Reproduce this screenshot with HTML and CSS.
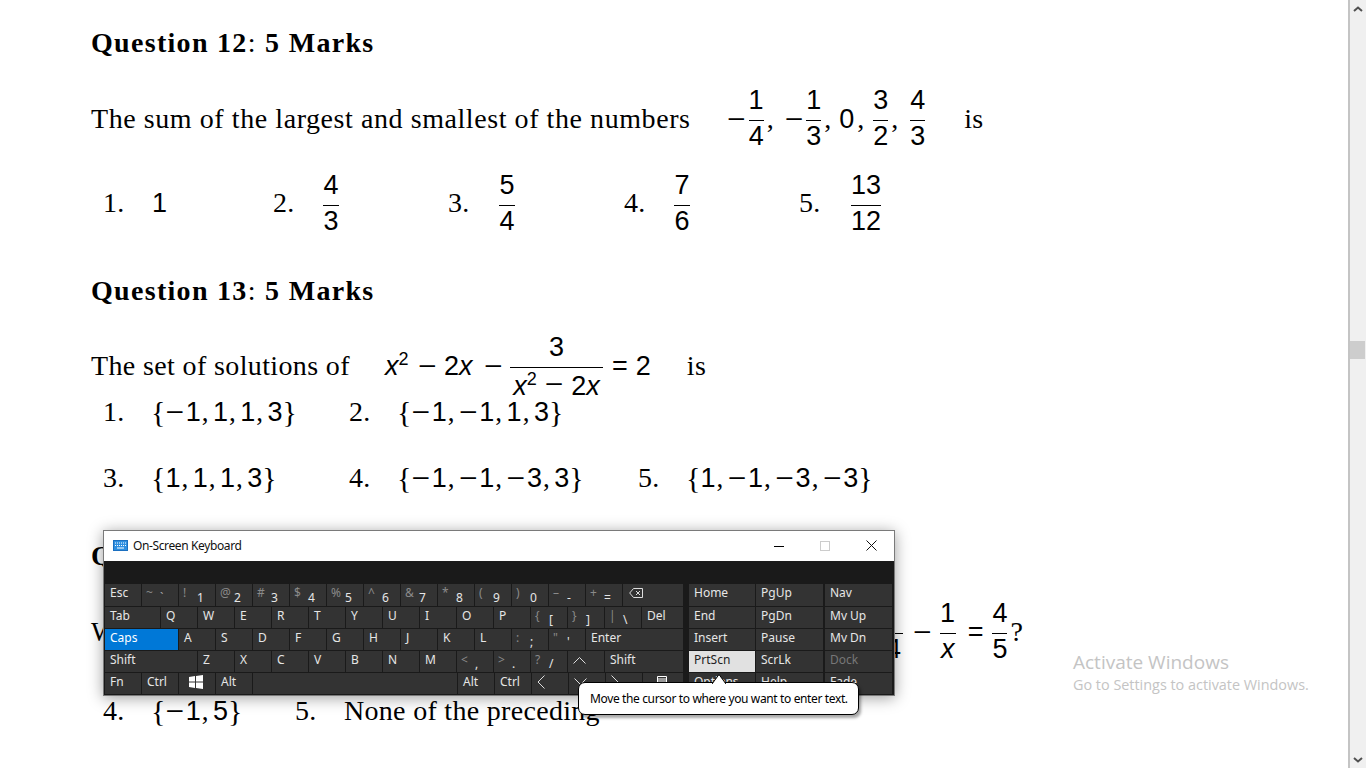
FILE: index.html
```html
<!DOCTYPE html>
<html lang="en">
<head>
<meta charset="utf-8">
<title>Question sheet</title>
<link rel="stylesheet" href="styles.css">
</head>
<body>
<div class="screen">
  <main class="doc">
    <h2 class="heading h12">Question 12<span class="colon">:</span> 5 Marks</h2>
    <div class="row q q12">
      <span class="t s-q12">The sum of the largest and smallest of the numbers</span>
      <span class="m mn a1">−</span><span class="frac f-a"><span>1</span><span>4</span></span><span class="t cm">,</span>
      <span class="m mn a2">−</span><span class="frac f-a"><span>1</span><span>3</span></span><span class="t cm">,</span>
      <span class="m a3">0</span><span class="t cm">,</span>
      <span class="frac f-a a4"><span>3</span><span>2</span></span><span class="t cm">,</span>
      <span class="frac f-a a5"><span>4</span><span>3</span></span>
      <span class="t a6">is</span>
    </div>
    <div class="row q opts12">
      <div class="opt"><span class="t n">1.</span><span class="m">1</span></div>
      <div class="opt"><span class="t n">2.</span><span class="frac"><span>4</span><span>3</span></span></div>
      <div class="opt"><span class="t n n3">3.</span><span class="frac"><span>5</span><span>4</span></span></div>
      <div class="opt"><span class="t n">4.</span><span class="frac"><span>7</span><span>6</span></span></div>
      <div class="opt"><span class="t n n5">5.</span><span class="frac f-w"><span>13</span><span>12</span></span></div>
    </div>

    <h2 class="heading h13">Question 13<span class="colon">:</span> 5 Marks</h2>
    <div class="row q q13">
      <span class="t s-q13">The set of solutions of</span>
      <span class="m b1"><i>x</i><sup>2</sup></span><span class="m mn b2">−</span><span class="m b3">2<i>x</i></span><span class="m mn b4">−</span>
      <span class="frac f-big"><span>3</span><span><i>x</i><sup>2</sup><b class="op">−</b>2<i>x</i></span></span>
      <span class="m b5">=</span><span class="m b6">2</span>
      <span class="t b7">is</span>
    </div>
    <div class="row line r1">
      <span class="t n">1.</span><span class="set w1"><span class="br">{</span><span class="mi">−</span>1<span class="c">,</span>1<span class="c">,</span>1<span class="c">,</span>3<span class="br">}</span></span>
      <span class="t n">2.</span><span class="set"><span class="br">{</span><span class="mi">−</span>1<span class="c">,</span><span class="mi">−</span>1<span class="c">,</span>1<span class="c">,</span>3<span class="br">}</span></span>
    </div>
    <div class="row line r2">
      <span class="t n">3.</span><span class="set w1"><span class="br">{</span>1<span class="c">,</span>1<span class="c">,</span>1<span class="c">,</span>3<span class="br">}</span></span>
      <span class="t n">4.</span><span class="set w2"><span class="br">{</span><span class="mi">−</span>1<span class="c">,</span><span class="mi">−</span>1<span class="c">,</span><span class="mi">−</span>3<span class="c">,</span>3<span class="br">}</span></span>
      <span class="t n">5.</span><span class="set"><span class="br">{</span>1<span class="c">,</span><span class="mi">−</span>1<span class="c">,</span><span class="mi">−</span>3<span class="c">,</span><span class="mi">−</span>3<span class="br">}</span></span>
    </div>

    <h2 class="heading h14">Question 14<span class="colon">:</span> 5 Marks</h2>
    <div class="row q q14">
      <span class="t s-q14">What is the set of all values of <i>x</i> such that</span>
      <span class="frac f-d"><span>1</span><span>14</span></span>
      <span class="m mn d2">−</span>
      <span class="frac d3"><span>1</span><span><i>x</i></span></span>
      <span class="m d4">=</span>
      <span class="frac f-a d5"><span>4</span><span>5</span></span>
      <span class="t qm">?</span>
    </div>
    <div class="row line r3">
      <span class="t n">4.</span><span class="set w3"><span class="br">{</span><span class="mi">−</span>1<span class="c">,</span>5<span class="br">}</span></span>
      <span class="t n n4">5.</span><span class="t none">None of the preceding</span>
    </div>
  </main>

  <aside class="scrollbar">
    <svg class="arrow" width="10" height="6" viewBox="0 0 10 6"><path d="M1 5l4-3.5L9 5" fill="none" stroke="#505050" stroke-width="2"/></svg>
    <div class="track"><div class="thumb"></div></div>
    <svg class="arrow" width="10" height="6" viewBox="0 0 10 6"><path d="M1 1l4 3.5L9 1" fill="none" stroke="#505050" stroke-width="2"/></svg>
  </aside>

  <div class="activate">
    <div class="act-1">Activate Windows</div>
    <div class="act-2">Go to Settings to activate Windows.</div>
  </div>

  <section class="osk">
    <header class="osk-title">
      <svg class="osk-icon" width="15" height="11" viewBox="0 0 15 11"><rect x="0.5" y="0.5" width="14" height="10" fill="#2f8fe0" stroke="#1b6fc0"/><path d="M2 3h11M2 5.5h11" stroke="#fff" stroke-dasharray="1 1"/><path d="M4 8h7" stroke="#fff"/></svg>
      <span class="osk-name">On-Screen Keyboard</span>
      <span class="win-btn"><svg width="10" height="10" viewBox="0 0 10 10"><path d="M0 5.5h10" stroke="#000"/></svg></span>
      <span class="win-btn"><svg width="10" height="10" viewBox="0 0 10 10"><rect x="0.5" y="0.5" width="9" height="9" fill="none" stroke="#ccc"/></svg></span>
      <span class="win-btn"><svg width="11" height="11" viewBox="0 0 11 11"><path d="M.5.5l10 10M10.500.5l-10 10" stroke="#111"/></svg></span>
    </header>
    <div class="osk-strip"></div>
    <div class="osk-keys">
      <div class="kb-main">
        <div class="kb-row top">
          <span class="key">Esc</span>
          <span class="key dual"><span class="sh">~</span><span class="mn dim">`</span></span>
          <span class="key dual"><span class="sh">!</span><span class="mn">1</span></span>
          <span class="key dual"><span class="sh">@</span><span class="mn">2</span></span>
          <span class="key dual"><span class="sh">#</span><span class="mn">3</span></span>
          <span class="key dual"><span class="sh">$</span><span class="mn">4</span></span>
          <span class="key dual"><span class="sh">%</span><span class="mn">5</span></span>
          <span class="key dual"><span class="sh">^</span><span class="mn">6</span></span>
          <span class="key dual"><span class="sh">&amp;</span><span class="mn">7</span></span>
          <span class="key dual"><span class="sh">*</span><span class="mn">8</span></span>
          <span class="key dual"><span class="sh">(</span><span class="mn">9</span></span>
          <span class="key dual"><span class="sh">)</span><span class="mn">0</span></span>
          <span class="key dual"><span class="sh">–</span><span class="mn">-</span></span>
          <span class="key dual"><span class="sh">+</span><span class="mn">=</span></span>
          <span class="key k-bksp"><svg width="14" height="10" viewBox="0 0 14 10"><path d="M4.500.5h9v9h-9L.7 5z" fill="none" stroke="#ddd"/><path d="M7 3l4 4M11 3L7 7" stroke="#ddd"/></svg></span>
        </div>
        <div class="kb-row">
          <span class="key k-tab">Tab</span>
          <span class="key">Q</span><span class="key">W</span><span class="key">E</span><span class="key">R</span><span class="key">T</span><span class="key">Y</span><span class="key">U</span><span class="key">I</span><span class="key">O</span><span class="key">P</span>
          <span class="key dual"><span class="sh">{</span><span class="mn">[</span></span>
          <span class="key dual"><span class="sh">}</span><span class="mn">]</span></span>
          <span class="key dual"><span class="sh">|</span><span class="mn">\</span></span>
          <span class="key k-del">Del</span>
        </div>
        <div class="kb-row">
          <span class="key k-caps">Caps</span>
          <span class="key">A</span><span class="key">S</span><span class="key">D</span><span class="key">F</span><span class="key">G</span><span class="key">H</span><span class="key">J</span><span class="key">K</span><span class="key">L</span>
          <span class="key dual"><span class="sh">:</span><span class="mn">;</span></span>
          <span class="key dual"><span class="sh">"</span><span class="mn">'</span></span>
          <span class="key k-enter">Enter</span>
        </div>
        <div class="kb-row">
          <span class="key k-shiftl">Shift</span>
          <span class="key">Z</span><span class="key">X</span><span class="key">C</span><span class="key">V</span><span class="key">B</span><span class="key">N</span><span class="key">M</span>
          <span class="key dual"><span class="sh">&lt;</span><span class="mn">,</span></span>
          <span class="key dual"><span class="sh">&gt;</span><span class="mn">.</span></span>
          <span class="key dual"><span class="sh">?</span><span class="mn">/</span></span>
          <span class="key"><svg width="13" height="8" viewBox="0 0 13 8"><path d="M.5 7.500l6-6 6 6" fill="none" stroke="#ddd"/></svg></span>
          <span class="key k-shiftr">Shift</span>
        </div>
        <div class="kb-row">
          <span class="key">Fn</span>
          <span class="key">Ctrl</span>
          <span class="key k-win"><svg width="14" height="14" viewBox="0 0 14 14"><path d="M0 2l6-.9V6.500H0zM7 1l7-1v6.500H7zM0 7.500h6v5.400l-6-.9zM7 7.500h7V14l-7-1z" fill="#fff"/></svg></span>
          <span class="key">Alt</span>
          <span class="key k-space"></span>
          <span class="key">Alt</span>
          <span class="key">Ctrl</span>
          <span class="key"><svg width="8" height="14" viewBox="0 0 8 14"><path d="M7.500.5L1 7l6.500 6.500" fill="none" stroke="#ddd"/></svg></span>
          <span class="key"><svg width="13" height="8" viewBox="0 0 13 8"><path d="M.5.500l6 6 6-6" fill="none" stroke="#ddd"/></svg></span>
          <span class="key"><svg width="8" height="14" viewBox="0 0 8 14"><path d="M.5.5L7 7 .5 13.500" fill="none" stroke="#ddd"/></svg></span>
          <span class="key k-menu"><svg width="10" height="12" viewBox="0 0 10 12"><path d="M.5.500h9v11h-9zM.5 3h9M.5 5h9" fill="none" stroke="#fff"/></svg></span>
        </div>
      </div>
      <div class="kb-side">
        <span class="key top">Home</span><span class="key top k-m">PgUp</span><span class="key top k-r">Nav</span>
        <span class="key">End</span><span class="key k-m">PgDn</span><span class="key k-r">Mv Up</span>
        <span class="key">Insert</span><span class="key k-m">Pause</span><span class="key k-r">Mv Dn</span>
        <span class="key k-on">PrtScn</span><span class="key k-m">ScrLk</span><span class="key k-r k-off">Dock</span>
        <span class="key">Options</span><span class="key k-m">Help</span><span class="key k-r">Fade</span>
      </div>
    </div>
  </section>

  <div class="tip">
    <svg class="tip-beak" width="14" height="10" viewBox="0 0 14 10"><path d="M0 10L7 0.500 14 10" fill="#fff" stroke="#000"/></svg>
    Move the cursor to where you want to enter text.
  </div>
</div>
</body>
</html>
```
FILE: styles.css
```css
* { box-sizing: border-box; }
html, body { margin: 0; padding: 0; }
body { width: 1366px; height: 768px; overflow: hidden; background: #fff; }

.screen { position: relative; display: flex; width: 1366px; height: 768px; overflow: hidden; }

.doc {
  flex: 1;
  padding: 28px 0 0 91px;
  font-family: "Liberation Sans", sans-serif;
  font-size: 27px;
  color: #000;
}

.heading {
  margin: 0;
  height: 30px;
  font-family: "Liberation Serif", serif;
  font-size: 28px;
  line-height: 30px;
  font-weight: 700;
  letter-spacing: 1.3px;
  white-space: nowrap;
}
.colon { font-weight: 400; }
.h13 { margin-top: 40px; }
.h14 { margin-top: 48px; }

.row { display: flex; align-items: center; white-space: nowrap; }
.q { height: 62px; }
.line { height: 30px; padding-left: 12px; }

.t { font-family: "Liberation Serif", serif; font-size: 28px; letter-spacing: 0.3px; flex: none; }
.m { font-family: "Liberation Sans", sans-serif; flex: none; }
.mn, .op, .mi { font-family: "Liberation Serif", serif; font-size: 33px; line-height: 1; font-weight: 400; }
.mi { margin-right: 1.7px; }
.cm { margin-left: 3px; line-height: 1; letter-spacing: 0; }

.frac { display: inline-flex; flex: none; flex-direction: column; align-items: center; width: 16px; line-height: 31px; }
.frac > span { display: block; text-align: center; height: 31px; white-space: nowrap; }
.frac > span:first-child { margin-bottom: 4.5px; }
.frac > span + span { border-top: 1px solid #000; width: 100%; height: 33.5px; }
.f-a { width: 15px; }
.f-w { width: 30px; }
.f-d { width: 32px; }
.frac.f-d > span + span { padding-right: 2px; }
.f-big { width: 93px; margin-left: 8px; }
.f-big sup, .b1 sup { font-size: 18px; line-height: 0; }
.op { margin: 0 8px; }

.q12 { margin-top: 29px; height: 64px; }
.s-q12 { width: 636px; letter-spacing: 0.57px; }
.a1 + .frac, .a2 + .frac { margin-left: 3px; }
.a2 { margin-left: 11px; }
.a3 { margin-left: 8px; }
.a4 { margin-left: 9px; }
.a5 { margin-left: 12px; }
.a6 { margin-left: 39px; }

.opts12 {
  margin-top: 21px;
  height: 64px;
  padding-left: 12px;
  display: grid;
  grid-template-columns: 170px 175px 176px 175px auto;
  grid-template-rows: 64px;
  align-items: center;
}
.opt { display: flex; align-items: center; }
.opt .m { margin-top: -2px; margin-left: -1px; }
.opt .t { margin-top: -2px; }
.n { width: 50px; }
.n3 { width: 51px; }
.n5 { width: 52px; }
.n4 { width: 49px; }

.q13 { margin-top: 29px; }
.s-q13 { width: 294px; letter-spacing: 0.37px; }
.b1 { width: 33px; }
.b2 { width: 26px; }
.b3 { width: 40px; }
.b4 { width: 18px; }
.b5 { margin-left: 9px; }
.b6 { margin-left: 8px; }
.b7 { margin-left: 36px; }

.set { display: inline-flex; flex: none; align-items: center; margin-left: -2px; font-family: "Liberation Sans", sans-serif; font-size: 27px; }
.w1 { width: 198px; }
.w2 { width: 241px; }
.w3 { width: 144px; }
.br { font-family: "Liberation Serif", serif; font-size: 30px; }
.c { font-family: "Liberation Serif", serif; margin: 0 4.5px 0 1px; }
.r2 { margin-top: 36px; }
.r3 { margin-top: 33px; }

.q14 { margin-top: 30px; }
.s-q14 { width: 780px; }
.d2 { margin-left: 10px; }
.d3 { margin-left: 8px; }
.d4 { margin-left: 12px; }
.d5 { margin-left: 9px; }
.qm { margin-left: 3px; }

.scrollbar {
  width: 18px;
  flex: none;
  display: flex;
  flex-direction: column;
  align-items: center;
  background: #f0f0f0;
  border-left: 2px solid #c4c4c4;
  padding: 6px 0 5px;
}
.track { flex: 1; width: 100%; padding-top: 329px; }
.thumb { width: 15px; height: 18px; background: #cdcdcd; }

.activate {
  position: absolute;
  left: 1073px;
  top: 649px;
  font-family: "Open Sans", sans-serif;
  color: #c4c4c4;
}
.act-1 { font-size: 19px; line-height: 26px; }
.act-2 { font-size: 14.4px; line-height: 20px; }

.osk {
  position: absolute;
  left: 103px;
  top: 530px;
  width: 792px;
  height: 166px;
  background: #1a1a1a;
  border: 1px solid #7a7a7a;
  box-shadow: 0 2px 14px rgba(0, 0, 0, .38);
  font-family: "Noto Sans", sans-serif;
  font-size: 12px;
  display: flex;
  flex-direction: column;
}
.osk-title { height: 30px; background: #fff; display: flex; align-items: center; color: #111; padding: 0 0 1px 9px; flex: none; }
.osk-icon { margin-right: 5px; }
.osk-name { flex: 1; letter-spacing: -0.38px; padding-bottom: 1px; }
.win-btn { width: 46px; display: flex; justify-content: center; align-items: center; }
.osk-strip { height: 23px; flex: none; }
.osk-keys { display: flex; padding-left: 1px; }

.kb-main { width: 579px; display: flex; flex-direction: column; gap: 1px; }
.kb-row { display: flex; gap: 1px; }
.key {
  width: 36px;
  height: 21px;
  flex: none;
  background: #333;
  color: #e6e6e6;
  display: flex;
  align-items: center;
  padding: 0 0 3px 5px;
  line-height: 1;
}
.top .key, .key.top { height: 22px; padding-bottom: 5px; }
.k-bksp { width: 60px; padding-left: 6px; }
.k-tab { width: 55px; }
.k-del { width: 41px; }
.k-caps { width: 73px; background: #0078d7; color: #fff; }
.k-enter { width: 97px; }
.k-shiftl { width: 92px; }
.k-shiftr { width: 78px; }
.k-space { width: 204px; }
.k-menu { width: 40px; padding-left: 14px; }
.k-win { padding-left: 10px; }

.key.dual { padding: 0 0 0 4px; }
.dual .sh { width: 14px; color: #8a8a8a; align-self: flex-start; padding-top: 3px; }
.dual .mn { font-family: inherit; color: #e6e6e6; align-self: flex-end; padding-bottom: 2px; font-size: 12px; line-height: 1; }
.dual .dim { color: #aaa; }

.kb-side {
  margin-left: 5px;
  display: grid;
  grid-template-columns: 66px 67px 68px;
  grid-auto-rows: min-content;
  gap: 1px;
}
.kb-side .key { width: auto; }
.k-r { margin-left: 1px; }
.k-on { background: #e1e1e1; color: #222; }
.k-off { color: #777; }

.tip {
  position: absolute;
  left: 578px;
  top: 682px;
  width: 281px;
  height: 33px;
  background: #fff;
  border: 1px solid #000;
  border-radius: 7px;
  box-shadow: 2px 3px 3px rgba(0, 0, 0, .35);
  font-family: "Noto Sans", sans-serif;
  font-size: 12px;
  letter-spacing: -0.37px;
  color: #000;
  display: flex;
  align-items: center;
  padding-left: 11px;
  white-space: nowrap;
}
.tip-beak { position: absolute; left: 133px; top: -9px; }
```
